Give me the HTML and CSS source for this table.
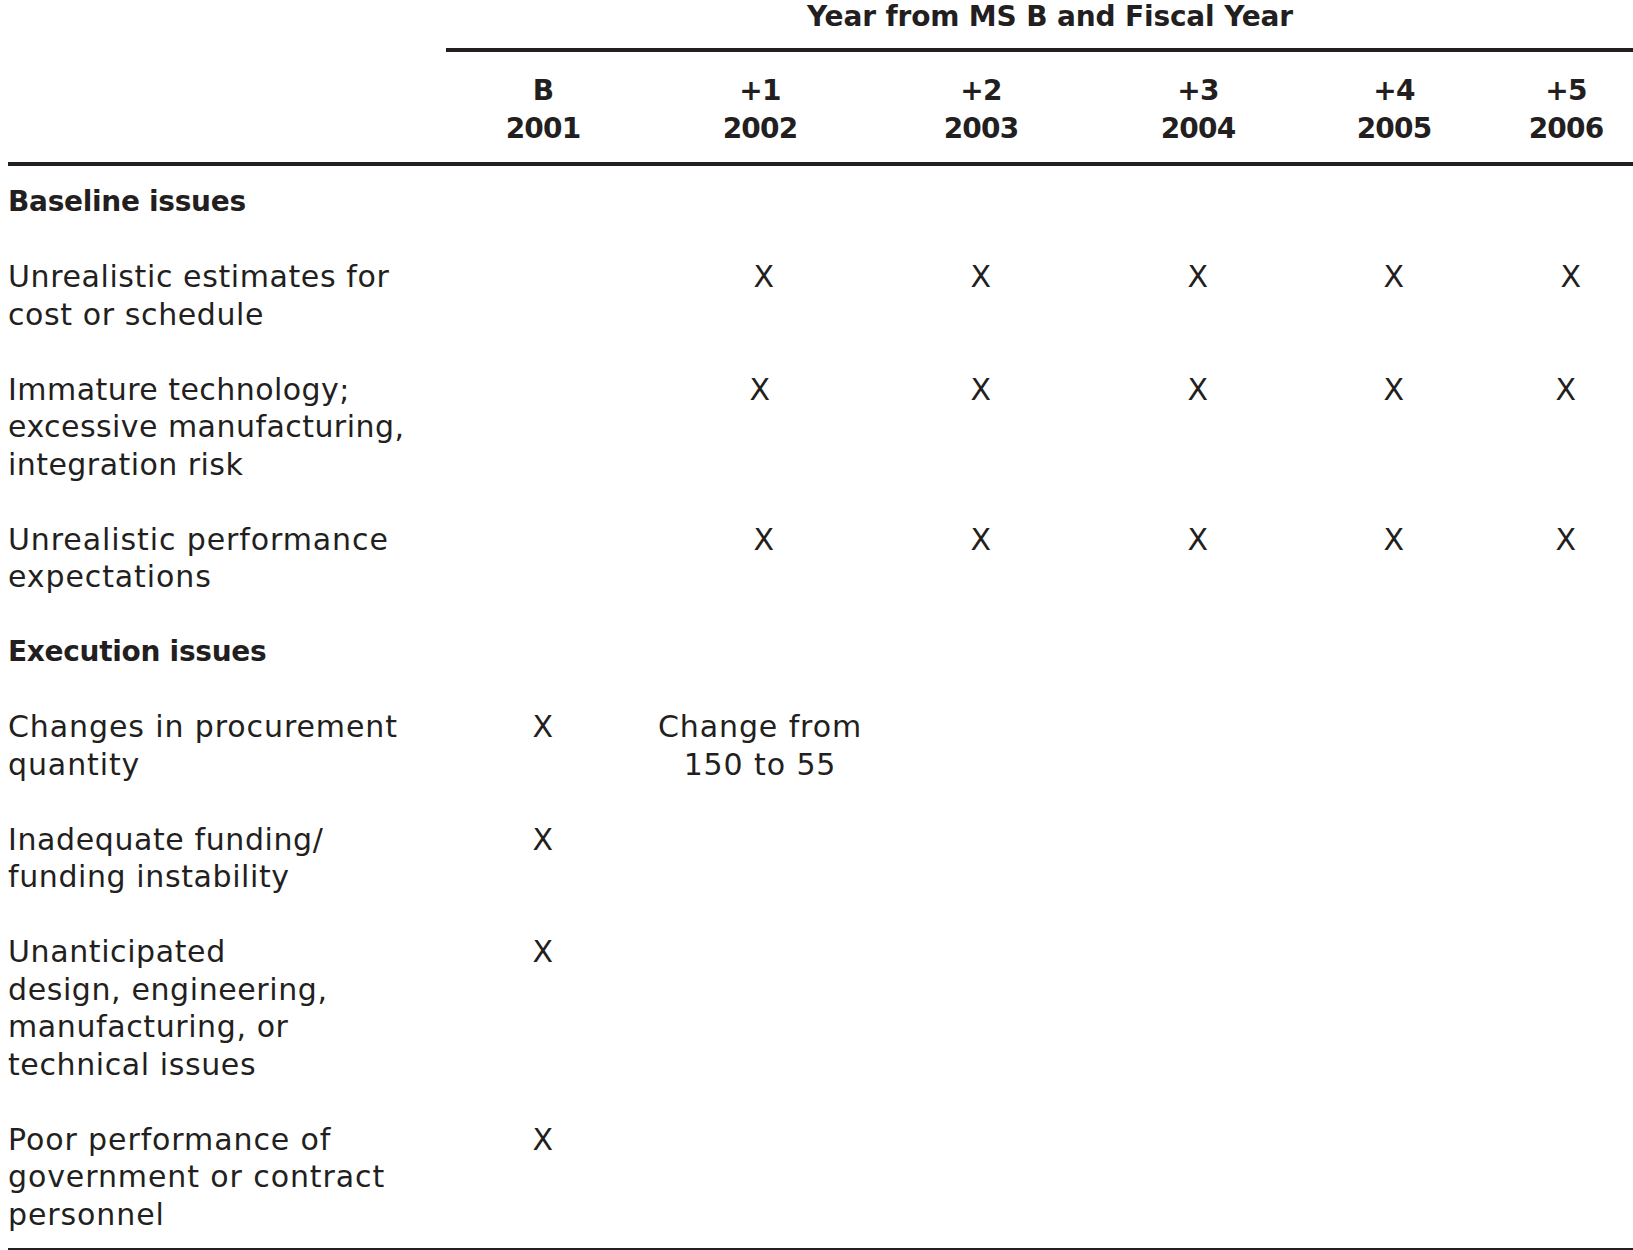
FILE: index.html
```html
<!DOCTYPE html>
<html lang="en">
<head>
<meta charset="utf-8">
<title>Year from MS B and Fiscal Year</title>
<link rel="stylesheet" href="styles.css">
</head>
<body>
<table class="issues">
  <colgroup>
    <col class="c-label">
    <col class="c-b">
    <col class="c-1">
    <col class="c-2">
    <col class="c-3">
    <col class="c-4">
    <col class="c-5">
  </colgroup>
  <thead>
    <tr class="super">
      <th class="blank"></th>
      <th class="super-title" colspan="6">Year from MS B and Fiscal Year</th>
    </tr>
    <tr class="years">
      <th class="blank"></th>
      <th>B<br>2001</th>
      <th>+1<br>2002</th>
      <th>+2<br>2003</th>
      <th>+3<br>2004</th>
      <th>+4<br>2005</th>
      <th class="last">+5<br>2006</th>
    </tr>
  </thead>
  <tbody>
    <tr class="first">
      <td class="label group">Baseline issues</td>
      <td></td><td></td><td></td><td></td><td></td><td class="last"></td>
    </tr>
    <tr>
      <td class="label">Unrealistic estimates for<br>cost or schedule</td>
      <td></td><td class="nudge">X</td><td>X</td><td>X</td><td>X</td><td class="last nudge">X</td>
    </tr>
    <tr>
      <td class="label tight">Immature technology;<br>excessive manufacturing,<br>integration risk</td>
      <td></td><td>X</td><td>X</td><td>X</td><td>X</td><td class="last">X</td>
    </tr>
    <tr>
      <td class="label wide">Unrealistic performance<br>expectations</td>
      <td></td><td class="nudge">X</td><td>X</td><td>X</td><td>X</td><td class="last">X</td>
    </tr>
    <tr>
      <td class="label group">Execution issues</td>
      <td></td><td></td><td></td><td></td><td></td><td class="last"></td>
    </tr>
    <tr>
      <td class="label wide">Changes in procurement<br>quantity</td>
      <td>X</td><td class="wide">Change from<br>150 to 55</td><td></td><td></td><td></td><td class="last"></td>
    </tr>
    <tr>
      <td class="label">Inadequate funding/<br>funding instability</td>
      <td>X</td><td></td><td></td><td></td><td></td><td class="last"></td>
    </tr>
    <tr>
      <td class="label">Unanticipated<br>design, engineering,<br>manufacturing, or<br>technical issues</td>
      <td>X</td><td></td><td></td><td></td><td></td><td class="last"></td>
    </tr>
    <tr class="final">
      <td class="label wide">Poor performance of<br>government or contract<br>personnel</td>
      <td>X</td><td></td><td></td><td></td><td></td><td class="last"></td>
    </tr>
  </tbody>
</table>
</body>
</html>
```

FILE: styles.css
```css
html, body {
  margin: 0;
  padding: 0;
  background: #ffffff;
  overflow: hidden;
}

body {
  padding-left: 8px;
  font-family: "DejaVu Sans", "Open Sans", "Liberation Sans", sans-serif;
  font-size: 30px;
  line-height: 37.5px;
  color: #231f20;
}

.issues {
  width: 1625px;
  table-layout: fixed;
  border-collapse: separate;
  border-spacing: 0;
}

.c-label { width: 438px; }
.c-b { width: 194px; }
.c-1 { width: 240px; }
.c-2 { width: 202px; }
.c-3 { width: 232px; }
.c-4 { width: 160px; }
.c-5 { width: 159px; }

.issues th,
.issues td {
  padding: 0 0 37.5px 0;
  vertical-align: top;
  text-align: center;
  font-weight: 400;
  white-space: nowrap;
  letter-spacing: 0.6px;
}

.issues td.tight {
  letter-spacing: 0.45px;
}

.issues td.wide {
  letter-spacing: 0.9px;
}

.issues th {
  font-size: 28px;
  font-weight: 700;
  letter-spacing: -0.8px;
}

.issues .last {
  padding-left: 25px;
}

/* Spanner heading */
.super th {
  line-height: 33px;
  padding: 0 0 15px 0;
}

.super .super-title {
  padding-left: 21px;
  letter-spacing: -0.15px;
  border-bottom: 4px solid #231f20;
}

/* Year header row */
.years th {
  padding-top: 20px;
  padding-bottom: 15px;
  border-bottom: 4px solid #231f20;
}

.years th.last {
  padding-left: 25px;
}

/* Body */
.issues td.label {
  text-align: left;
}

.issues td.group {
  font-size: 28px;
  font-weight: 700;
  letter-spacing: -0.3px;
}

.first td {
  padding-top: 17px;
}

.issues td.nudge {
  padding-left: 8px;
}

.issues td.last.nudge {
  padding-left: 35px;
}

.final td {
  padding-bottom: 15px;
  border-bottom: 2px solid #231f20;
}
```
